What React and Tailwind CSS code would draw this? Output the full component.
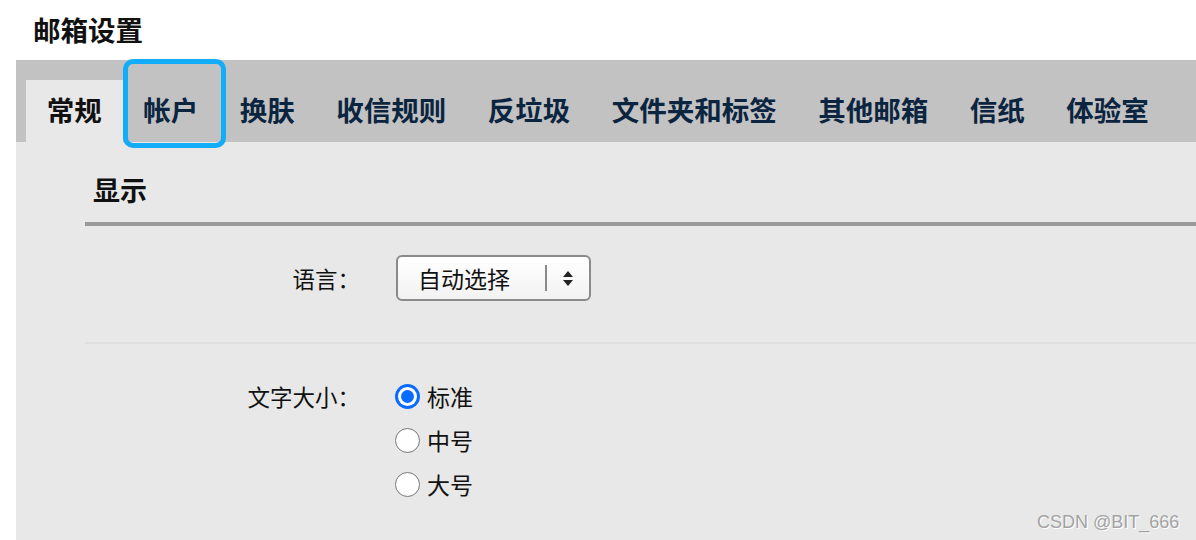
import React from 'react'

var tabs = ['常规', '帐户', '换肤', '收信规则', '反垃圾', '文件夹和标签', '其他邮箱', '信纸', '体验室']

function Radio(props) {
  return (
    <label className="flex items-center h-[44px] gap-[7px]">
      {props.checked ? (
        <span className="w-[25px] h-[25px] rounded-full bg-[#0a6cff] flex items-center justify-center">
          <span className="w-[19px] h-[19px] rounded-full bg-white flex items-center justify-center">
            <span className="w-[13px] h-[13px] rounded-full bg-[#0a6cff]" />
          </span>
        </span>
      ) : (
        <span className="w-[25px] h-[25px] rounded-full bg-white border-[1.5px] border-[#777]" />
      )}
      <span className="text-[23px] leading-none text-[#111]">{props.label}</span>
    </label>
  )
}

export default function App() {
  return (
    <div className="relative w-[1196px] h-[540px] overflow-hidden bg-white" style={{ fontFamily: '"Noto Sans CJK SC", "Noto Sans", sans-serif' }}>
      {/* 标题 */}
      <div className="h-[60px] pl-[33px] pt-[16px]">
        <h1 className="text-[27.5px] leading-none font-bold text-[#111]">邮箱设置</h1>
      </div>

      <div className="ml-[16px]">
        {/* 标签栏 */}
        <div className="h-[82px] bg-[#c2c2c2] flex items-end pl-[10px]">
          {tabs.map(function(t, i) {
            return (
              <div
                key={t}
                className={'h-[62px] px-[20.75px] pb-[2px] flex items-center text-[27.5px] leading-none font-bold ' +
                  (i === 0 ? 'bg-[#e8e8e8] text-[#111]' : 'text-[#0b2541]')}
              >
                {t}
              </div>
            )
          })}
        </div>

        {/* 内容 */}
        <div className="bg-[#e8e8e8] h-[398px] pl-[69px]">
          <div className="h-[84px] flex items-end pb-[19px] pl-[8px] border-b-4 border-[#999]">
            <h2 className="text-[27px] leading-none font-bold text-[#111]">显示</h2>
          </div>

          {/* 语言 */}
          <div className="flex items-center pt-[29px] pb-[41px] border-b-2 border-[#dfdfdf]">
            <div className="w-[275px] text-right text-[22.5px] leading-none text-[#111]">语言：</div>
            <div className="ml-[36px] w-[195px] h-[46px] rounded-[6px] border-2 border-[#8a8a8a] bg-gradient-to-b from-white to-[#f2f2f2] flex items-center pl-[20px]">
              <span className="text-[23px] leading-none text-[#111]">自动选择</span>
              <span className="ml-auto w-[2px] h-[26px] bg-[#8a8a8a]" />
              <span className="w-[42px] flex flex-col items-center gap-[3px]">
                <svg width="10" height="6" viewBox="0 0 10 6"><path d="M5 0 L10 6 L0 6 Z" fill="#222" /></svg>
                <svg width="10" height="6" viewBox="0 0 10 6"><path d="M0 0 L10 0 L5 6 Z" fill="#222" /></svg>
              </span>
            </div>
          </div>

          {/* 文字大小 */}
          <div className="flex items-start pt-[30px]">
            <div className="w-[275px] h-[44px] flex items-center justify-end text-[22.5px] leading-none text-[#111]">文字大小：</div>
            <div className="ml-[35px] flex flex-col">
              <Radio checked label="标准" />
              <Radio label="中号" />
              <Radio label="大号" />
            </div>
          </div>
        </div>
      </div>

      {/* 标注框 */}
      <div className="absolute left-[123px] top-[59px] w-[103px] h-[89px] rounded-[10px] border-[5px] border-[#12acf8]" />

      {/* 水印 */}
      <div
        className="absolute left-[1037px] top-[513px] text-[18px] leading-none text-[#a3a3a3] [text-shadow:1px_1px_0_#fff]"
        style={{ fontFamily: '"Liberation Sans", Arial, sans-serif' }}
      >
        CSDN @BIT_666
      </div>
    </div>
  )
}
